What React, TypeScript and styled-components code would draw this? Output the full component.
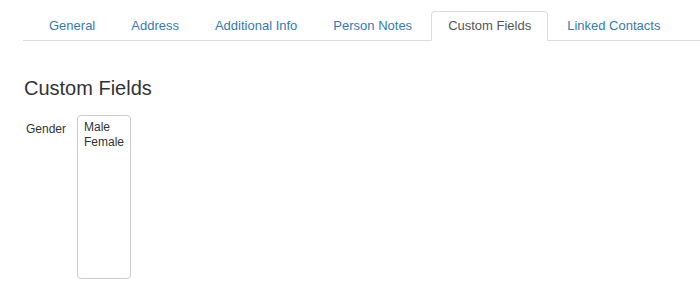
import React from "react";
import styled, { createGlobalStyle } from "styled-components";

const Global = createGlobalStyle`
  html, body { margin: 0; padding: 0; background: #fff; }
  body { font-family: "Liberation Sans", Arial, sans-serif; color: #333; }
`;

const Page = styled.div`
  padding: 11px 0 0 23px;
`;

const Tabs = styled.ul`
  display: flex;
  list-style: none;
  margin: 0;
  padding: 0 0 0 9px;
  border-bottom: 1px solid #ddd;
`;

const Tab = styled.li<{ $active?: boolean }>`
  margin: 0 2px -1px 0;
  a {
    display: block;
    padding: 5px 16px;
    font-size: 13px;
    line-height: 18px;
    text-decoration: none;
    border: 1px solid ${(p) => (p.$active ? "#ddd" : "transparent")};
    border-bottom-color: ${(p) => (p.$active ? "#fff" : "transparent")};
    border-radius: 4px 4px 0 0;
    background: ${(p) => (p.$active ? "#fff" : "transparent")};
    color: ${(p) => (p.$active ? "#555" : "#337ab7")};
  }
`;

const Heading = styled.h3`
  margin: 36px 0 16px 1px;
  font-size: 20px;
  line-height: 22px;
  font-weight: normal;
  color: #333;
`;

const Row = styled.div`
  display: flex;
  align-items: flex-start;
  margin-left: 1px;
`;

const Label = styled.label`
  width: 53px;
  padding: 7px 0 0 2px;
  box-sizing: border-box;
  font-size: 12px;
  line-height: 14px;
`;

const ListBox = styled.div`
  width: 54px;
  height: 164px;
  box-sizing: border-box;
  border: 1px solid #ccc;
  border-radius: 4px;
  padding: 4px 6px;
  font-size: 12px;
  line-height: 15px;
`;

const Option = styled.div``;

const tabs = ["General", "Address", "Additional Info", "Person Notes", "Custom Fields", "Linked Contacts"];

export default function App() {
  return (
    <Page>
      <Global />
      <Tabs>
        {tabs.map((t) => (
          <Tab key={t} $active={t === "Custom Fields"}>
            <a href="#">{t}</a>
          </Tab>
        ))}
      </Tabs>
      <Heading>Custom Fields</Heading>
      <Row>
        <Label>Gender</Label>
        <ListBox role="listbox" aria-multiselectable="true">
          <Option role="option">Male</Option>
          <Option role="option">Female</Option>
        </ListBox>
      </Row>
    </Page>
  );
}
